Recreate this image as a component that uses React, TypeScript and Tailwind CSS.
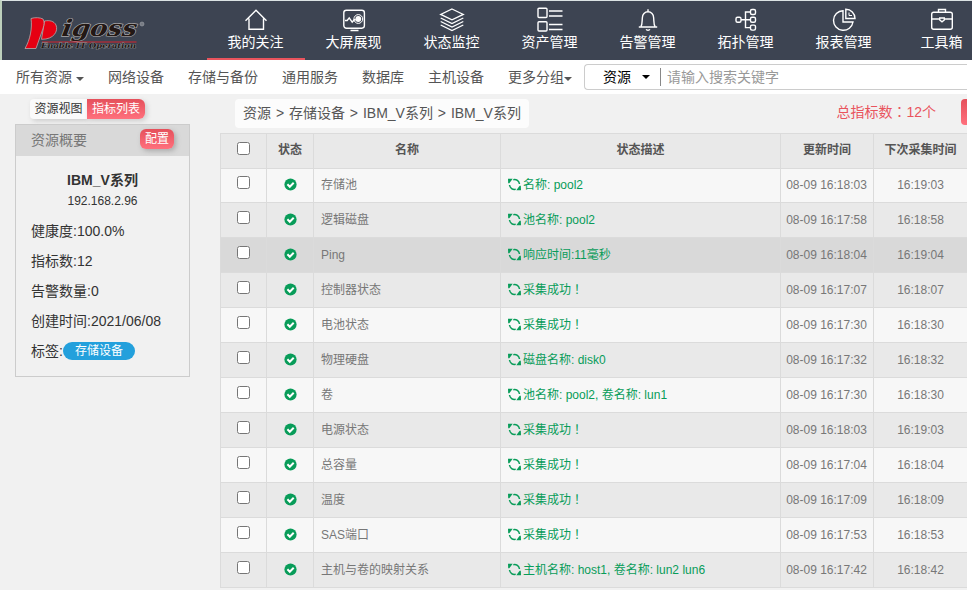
import React from "react";

const line = { fill: "none", stroke: "#fff", strokeWidth: 1.4 };

const navItems: { label: string; icon: React.ReactNode }[] = [
  {
    label: "我的关注",
    icon: <path d="M2.500 13.700 13 3.200l10.500 10.500M6 11.500v10.700h14.500V11.500" {...line} />,
  },
  {
    label: "大屏展现",
    icon: (
      <g {...line}>
        <rect x="2.800" y="3.200" width="20.600" height="18" rx="2.600" />
        <path d="M4 13.500h2.200l2-2.600 3 4.200 2-2.400h1.500M9.500 23.500h8" />
        <circle cx="17.300" cy="12" r="4.400" strokeWidth="1" />
        <circle cx="17.300" cy="12" r="2.200" fill="#fff" />
      </g>
    ),
  },
  {
    label: "状态监控",
    icon: (
      <g {...line} strokeWidth="1.300">
        <path d="M13 2 24.300 7.400 13 12.800 1.700 7.400z" />
        <path d="M1.700 11 13 16.600l11.300-5.600M1.700 14.500 13 20.100l11.300-5.600M1.700 18 13 23.600l11.300-5.600" />
      </g>
    ),
  },
  {
    label: "资产管理",
    icon: (
      <g {...line}>
        <rect x="1" y="1.200" width="9" height="9.300" rx="1" />
        <rect x="1" y="14.700" width="9" height="9.300" rx="1" />
        <path d="M12 4h13.500M12 9h13.500M12 17.500h13.500M12 22.500h13.500" />
      </g>
    ),
  },
  {
    label: "告警管理",
    icon: (
      <g {...line}>
        <path d="M3.800 20h18.400M6 19.500c1.400-2 1-6 1.400-9A5.600 5.600 0 0 1 13 4.700a5.600 5.600 0 0 1 5.600 5.800c.4 3 0 7 1.400 9M13 4.500V2.300M11.200 22.200c.5 1.300 3.100 1.300 3.600 0" />
      </g>
    ),
  },
  {
    label: "拓扑管理",
    icon: (
      <g {...line}>
        <rect x="3" y="10.300" width="5" height="5" rx="1.500" />
        <rect x="17.500" y="2.500" width="5" height="5" rx="1.500" />
        <rect x="17.500" y="10.300" width="5" height="5" rx="1.500" />
        <rect x="17.500" y="18.100" width="5" height="5" rx="1.500" />
        <path d="M8 12.800h9.500M17.500 5h-5v15.600h5" />
      </g>
    ),
  },
  {
    label: "报表管理",
    icon: (
      <g {...line}>
        <path d="M12 3.700A9.800 9.800 0 1 0 22 15H12z" />
        <path d="M14.800 2.300v9.200h9.200a9.200 9.200 0 0 0-9.200-9.200z" />
        <path d="M18 5.500v3h3" strokeWidth="1" />
      </g>
    ),
  },
  {
    label: "工具箱",
    icon: (
      <g {...line}>
        <rect x="2.700" y="5.200" width="20.600" height="17" rx="2" />
        <path d="M9.500 5V2.500h7V5M3 12h7.500M15.500 12H23" />
        <path d="M10.700 11h4.600v2L13 14.800 10.700 13z" />
      </g>
    ),
  },
];

const groups = ["网络设备", "存储与备份", "通用服务", "数据库", "主机设备"];

const rows: [string, string, string, string][] = [
  ["存储池", "名称: pool2", "08-09 16:18:03", "16:19:03"],
  ["逻辑磁盘", "池名称: pool2", "08-09 16:17:58", "16:18:58"],
  ["Ping", "响应时间:11毫秒", "08-09 16:18:04", "16:19:04"],
  ["控制器状态", "采集成功！", "08-09 16:17:07", "16:18:07"],
  ["电池状态", "采集成功！", "08-09 16:17:30", "16:18:30"],
  ["物理硬盘", "磁盘名称: disk0", "08-09 16:17:32", "16:18:32"],
  ["卷", "池名称: pool2, 卷名称: lun1", "08-09 16:17:30", "16:18:30"],
  ["电源状态", "采集成功！", "08-09 16:18:03", "16:19:03"],
  ["总容量", "采集成功！", "08-09 16:17:04", "16:18:04"],
  ["温度", "采集成功！", "08-09 16:17:09", "16:18:09"],
  ["SAS端口", "采集成功！", "08-09 16:17:53", "16:18:53"],
  ["主机与卷的映射关系", "主机名称: host1, 卷名称: lun2 lun6", "08-09 16:17:42", "16:18:42"],
];

function Caret({ className = "" }: { className?: string }) {
  return (
    <svg width="8" height="4" viewBox="0 0 8 4" className={className}>
      <path d="M0 0h8L4 4z" fill="currentColor" />
    </svg>
  );
}

// Full-width punctuation sits in the middle of its em box in the TC face.
function CenteredMark({ children }: { children: string }) {
  return (
    <span lang="zh-TW" className="font-['Noto_Sans_CJK_TC',sans-serif] leading-none">
      {children}
    </span>
  );
}

function Logo() {
  return (
    <svg width="136" height="54" viewBox="0 -11 136 54" className="mt-1 -mr-[10px] ml-5 shrink-0 overflow-visible">
      <path
        d="M22.500 5c5-1 9.500 0 11.500 4 2.500 6-2 14.500-14.500 14.300z"
        fill="#e60012"
        stroke="#b9a9ab"
        strokeWidth=".8"
      />
      <path
        d="M9 2.500c4-1.300 9-1 12 .5 1.800 2.500 1 6 .2 9L14 32.500H3C8 24 10.500 12 9 2.500z"
        fill="#e60012"
        stroke="#b9a9ab"
        strokeWidth=".8"
      />
      <text
        transform="translate(39 20) skewX(-9)"
        fontFamily="'DejaVu Serif', 'Liberation Serif', serif"
        fontSize="23"
        fontStyle="italic"
        fontWeight="700"
        textLength="75"
        lengthAdjust="spacingAndGlyphs"
        fill="#231815"
        stroke="#aaa9ab"
        strokeWidth="1.300"
        paintOrder="stroke"
      >
        igoss
      </text>
      <circle cx="120" cy="8" r="2" fill="#777b84" stroke="#a0a3aa" strokeWidth=".6" />
      <path d="M20 26h94.500" stroke="#d8232c" strokeWidth="1" />
      <text
        x="19"
        y="32.200"
        fontFamily="'DejaVu Serif', 'Liberation Serif', serif"
        fontSize="7"
        fontStyle="italic"
        fontWeight="700"
        textLength="95"
        lengthAdjust="spacingAndGlyphs"
        fill="#231815"
        stroke="#96979c"
        strokeWidth=".7"
        paintOrder="stroke"
      >
        Enable IT Operation
      </text>
    </svg>
  );
}

function CheckCircle() {
  return (
    <svg width="13" height="13" viewBox="0 0 13 13" className="mb-px">
      <circle cx="6.500" cy="6.500" r="6.100" fill="#089c59" />
      <path d="m3.400 6.200 2.400 2.500 3.900-3.900" fill="none" stroke="#fff" strokeWidth="2" />
    </svg>
  );
}

function Refresh() {
  return (
    <svg width="13" height="13" viewBox="0 0 13 13" className="mb-px shrink-0">
      <g fill="none" stroke="currentColor" strokeWidth="1.500">
        <path d="M5.300 1.700c3.200-.6 5.700 1.200 6.200 4.300" />
        <path d="M7.700 11.300C4.500 11.900 2 10.100 1.500 7" />
      </g>
      <path d="M0 .8h4.700L3.200 2.700 1.300 5.200H.2zM13 12.200H8.300l1.500-1.900 1.900-2.500h1.100z" fill="currentColor" />
    </svg>
  );
}

const columns = "grid grid-cols-[46px_47px_187px_280px_93px_94px] border-t border-[#dbdbdb]";
const cell = "flex items-center border-l border-[#dbdbdb]";

export default function App() {
  return (
    <div className="h-[590px] w-[972px] overflow-hidden bg-white font-['Liberation_Sans','Noto_Sans_CJK_SC',sans-serif] text-sm text-[#555]">
      <header className="flex h-[60px] border-t border-l-2 border-t-[#dbe2e3] border-l-[#bdd0bc] bg-[#3d4452]">
        <Logo />
        <nav className="ml-[59px] flex shrink-0">
          {navItems.map((item, i) => (
            <div
              key={item.label}
              className={`flex h-[59px] w-[98px] shrink-0 flex-col items-center pt-[6px] pr-px text-white ${i === 0 ? "border-b-2 border-[#e9545d]" : ""}`}
            >
              <svg width="26" height="25" viewBox="0 0 26 25">
                {item.icon}
              </svg>
              <span className="leading-5">{item.label}</span>
            </div>
          ))}
        </nav>
      </header>

      <div className="flex h-[34px] items-center pl-4 whitespace-nowrap">
        <span>所有资源</span>
        <Caret className="mt-1 mr-6 ml-1 shrink-0" />
        <div className="flex gap-6">
          {groups.map((g) => (
            <span key={g}>{g}</span>
          ))}
          <span>更多分组</span>
        </div>
        <Caret className="mt-1 shrink-0" />
        <div className="mr-[5px] ml-3 flex h-[26px] flex-1 items-center rounded-l border border-r-0 border-[#ccc] pl-[18px]">
          <span className="text-black">资源</span>
          <Caret className="ml-[11px] text-black" />
          <span className="ml-[10px] h-[18px] w-px bg-[#888]" />
          <span className="ml-[6px] text-[#999]">请输入搜索关键字</span>
        </div>
      </div>

      <main className="flex h-[496px] w-[967px] bg-[#f1f1f1]">
        <aside className="w-[220px] shrink-0 pl-[15px]">
          <div className="ml-[15px] flex h-[30px] pt-[5px] text-xs leading-5">
            <span className="h-5 w-[57px] rounded-l bg-[#fafafa] text-center text-[#333] shadow-[2px_2px_5px_#ccc]">资源视图</span>
            <span className="h-5 w-[58px] rounded-r-md bg-linear-to-b from-[#e5505b] to-[#ff707d] text-center text-white shadow-[2px_2px_5px_#ccc]">
              指标列表
            </span>
          </div>
          <section className="h-[253px] w-[175px] border border-[#ccc] text-[#333]">
            <div className="flex h-[31px] items-center justify-between bg-[#d9d9d9] pr-[15px] pl-[15px] text-[#777]">
              <span className="mb-px">资源概要</span>
              <span className="mb-[3px] h-5 w-[34px] rounded-md bg-linear-to-b from-[#e5505b] to-[#ff707d] text-center text-xs leading-5 text-white shadow-[2px_2px_5px_#aaa]">
                配置
              </span>
            </div>
            <div className="pt-[14px] text-center leading-5 font-bold">IBM_V系列</div>
            <div className="pt-px text-center text-xs leading-5">192.168.2.96</div>
            <div className="pt-[5px] pl-[15px] leading-[30px]">
              <div>健康度:100.0%</div>
              <div>指标数:12</div>
              <div>告警数量:0</div>
              <div>创建时间:2021/06/08</div>
              <div className="flex items-center">
                标签:
                <span className="h-[18px] w-[72px] rounded-full bg-[#23a0dc] text-center text-xs leading-[18px] text-white">存储设备</span>
              </div>
            </div>
          </section>
        </aside>

        <section className="w-[747px] shrink-0">
          <div className="flex h-[39px] items-start pt-[5px]">
            <div className="ml-[15px] h-[29px] w-[294px] rounded bg-[#fcfcfc] pl-2 leading-[29px] whitespace-nowrap [word-spacing:1px]">
              资源 &gt; 存储设备 &gt; IBM_V系列 &gt; IBM_V系列
            </div>
            <span className="mr-px ml-auto leading-[26px] text-[#e9545d]">
              总指标数<CenteredMark>：</CenteredMark>12个
            </span>
            <span className="ml-6 h-[26px] w-[6px] rounded-l bg-linear-to-b from-[#e5505b] to-[#ff707d]" />
          </div>

          <div className="border-b border-[#dbdbdb] text-xs">
            <div className={`${columns} h-[35px] bg-[#e9e9e9] font-bold`}>
              <div className={`${cell} justify-center`}>
                <input type="checkbox" className="mb-[5px] h-[13px] w-[13px]" />
              </div>
              {["状态", "名称", "状态描述", "更新时间", "下次采集时间"].map((h) => (
                <div key={h} className={`${cell} justify-center pb-[2px]`}>
                  {h}
                </div>
              ))}
            </div>
            {rows.map(([name, status, updated, next], i) => (
              <div
                key={name}
                className={`${columns} text-[#777] ${i === 0 ? "h-[34px]" : "h-[35px]"} ${i === 2 ? "bg-[#d9d9d9]" : i % 2 ? "bg-[#e9e9e9]" : "bg-[#f7f7f7]"}`}
              >
                <div className={`${cell} justify-center`}>
                  <input type="checkbox" className="mb-[6px] h-[13px] w-[13px]" />
                </div>
                <div className={`${cell} justify-center ${i === 0 ? "pb-px" : ""}`}>
                  <CheckCircle />
                </div>
                <div className={`${cell} pl-[7px] ${i === 0 ? "pb-px" : ""}`}>{name}</div>
                <div className={`${cell} gap-[2px] pl-[7px] text-[#089c59] ${i === 0 ? "pb-px" : ""}`}>
                  <Refresh />
                  <span>
                    {status.replace("！", "")}
                    {status.endsWith("！") && <CenteredMark>！</CenteredMark>}
                  </span>
                </div>
                <div className={`${cell} justify-center pr-px ${i === 0 ? "pb-px" : ""}`}>{updated}</div>
                <div className={`${cell} justify-center ${i === 0 ? "pb-px" : ""}`}>{next}</div>
              </div>
            ))}
          </div>
        </section>
      </main>
    </div>
  );
}
